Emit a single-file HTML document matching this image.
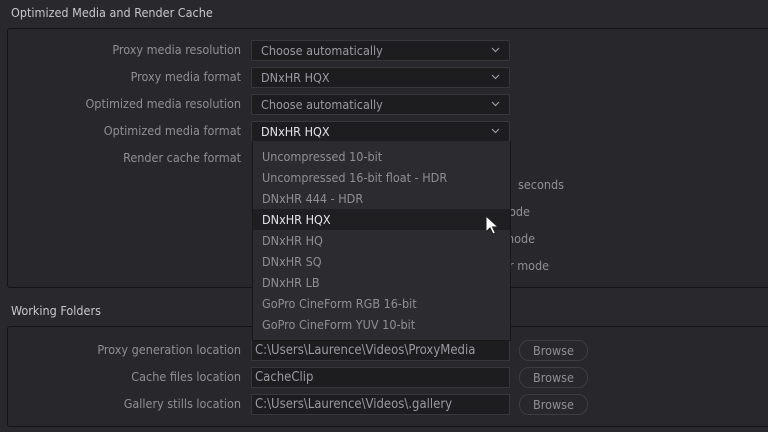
<!DOCTYPE html>
<html><head><style>
body{margin:0;width:768px;height:432px;background:#28282d;font-family:"DejaVu Sans Condensed","Liberation Sans",sans-serif;font-size:12.5px;color:#8f8f94;position:relative;overflow:hidden}
.a{position:absolute;white-space:nowrap}
.t{color:#c8c8cc;font-size:12.5px}
.panel{position:absolute;background:#28282c;border:1px solid #141416;border-radius:3px}
.lbl{position:absolute;right:527px;text-align:right;line-height:20px;font-size:12.5px}
.sel{position:absolute;left:251px;height:19px;background:#1d1d20;border:1px solid #38383c;border-radius:2px;line-height:19px;padding-left:9px;box-sizing:content-box;width:248px;color:#9a9aa0}
.sel svg{position:absolute;right:9px;top:6px}
.inp{position:absolute;left:251px;width:254px;height:19px;background:#1d1d20;border:1px solid #38383c;line-height:19px;padding-left:3px;color:#9a9aa0;font-family:"Liberation Sans Narrow","DejaVu Sans Condensed",sans-serif;font-size:13px}
.btn{position:absolute;left:519px;width:67px;height:19px;border:1px solid #3e3e42;border-radius:10px;text-align:center;line-height:19px;color:#8f8f94}
.menu{position:absolute;z-index:5;left:252px;top:141px;width:257px;height:199px;background:#2b2b30;border:1px solid #18181a;border-top:none}
.mi{position:absolute;left:0;width:257px;height:21px;line-height:21px;padding-left:9px;box-sizing:border-box;color:#8f8f94}
</style></head><body>
<div class="a t" style="left:11px;top:4px;line-height:18px">Optimized Media and Render Cache</div>
<div class="panel" style="left:7px;top:28px;width:770px;height:258px"></div>
<div class="lbl" style="top:40px">Proxy media resolution</div>
<div class="lbl" style="top:67px">Proxy media format</div>
<div class="lbl" style="top:94px">Optimized media resolution</div>
<div class="lbl" style="top:121px">Optimized media format</div>
<div class="lbl" style="top:148px">Render cache format</div>
<div class="sel" style="top:40px">Choose automatically<svg width="9" height="6"><path d="M1 1l3.5 3.5L8 1" stroke="#9a9aa0" fill="none" stroke-width="1.2"/></svg></div>
<div class="sel" style="top:67px">DNxHR HQX<svg width="9" height="6"><path d="M1 1l3.5 3.5L8 1" stroke="#9a9aa0" fill="none" stroke-width="1.2"/></svg></div>
<div class="sel" style="top:94px">Choose automatically<svg width="9" height="6"><path d="M1 1l3.5 3.5L8 1" stroke="#9a9aa0" fill="none" stroke-width="1.2"/></svg></div>
<div class="sel" style="top:121px;color:#e4e4e8">DNxHR HQX<svg width="9" height="6"><path d="M1 1l3.5 3.5L8 1" stroke="#9a9aa0" fill="none" stroke-width="1.2"/></svg></div>
<div class="a" style="left:518px;top:177px">seconds</div>
<div class="a" style="left:509px;top:204px">ode</div>
<div class="a" style="left:507px;top:231px">node</div>
<div class="a" style="left:509px;top:258px">r mode</div>
<div class="menu">
<div class="mi" style="top:5px">Uncompressed 10-bit</div>
<div class="mi" style="top:26px">Uncompressed 16-bit float - HDR</div>
<div class="mi" style="top:47px">DNxHR 444 - HDR</div>
<div class="mi" style="top:68px;background:#1f1f22;color:#e4e4e8">DNxHR HQX</div>
<div class="mi" style="top:89px">DNxHR HQ</div>
<div class="mi" style="top:110px">DNxHR SQ</div>
<div class="mi" style="top:131px">DNxHR LB</div>
<div class="mi" style="top:152px">GoPro CineForm RGB 16-bit</div>
<div class="mi" style="top:173px">GoPro CineForm YUV 10-bit</div>
<svg style="position:absolute;left:232px;top:74px" width="14" height="22"><path d="M1 1v16l4-4 3 6 2.5-1-3-6h5.5z" fill="#fff" stroke="#222" stroke-width="1"/></svg>
</div>
<div class="a t" style="left:11px;top:302px;line-height:18px">Working Folders</div>
<div class="panel" style="left:7px;top:326px;width:770px;height:99px"></div>
<div class="lbl" style="top:340px">Proxy generation location</div>
<div class="lbl" style="top:367px">Cache files location</div>
<div class="lbl" style="top:394px">Gallery stills location</div>
<div class="inp" style="top:340px">C:\Users\Laurence\Videos\ProxyMedia</div>
<div class="inp" style="top:367px">CacheClip</div>
<div class="inp" style="top:394px">C:\Users\Laurence\Videos\.gallery</div>
<div class="btn" style="top:340px">Browse</div>
<div class="btn" style="top:367px">Browse</div>
<div class="btn" style="top:394px">Browse</div>
</body></html>
